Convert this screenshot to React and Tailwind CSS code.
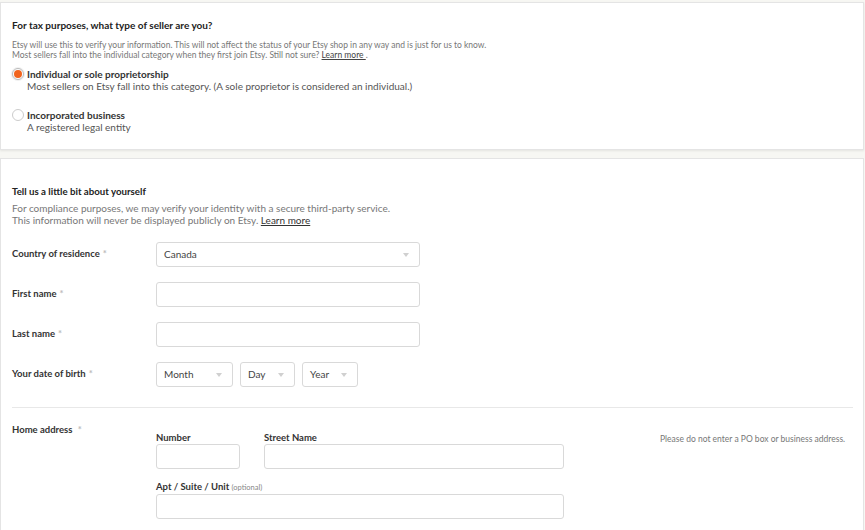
import React from "react";

const font = { fontFamily: "Lato, 'Open Sans', sans-serif" };

function Chevron() {
  return (
    <svg width="6" height="4" viewBox="0 0 6 4" className="shrink-0">
      <path d="M0 0 L6 0 L3 4 Z" fill="#d0d0d0" />
    </svg>
  );
}

function Select({ value, w }) {
  return (
    <div className={`flex items-center justify-between h-[25px] border border-[#d9d9d9] rounded-[3px] bg-white pl-[7px] pr-[10px] text-[10px] text-[#444] ${w}`}>
      <span>{value}</span>
      <Chevron />
    </div>
  );
}

function Input({ w }) {
  return <div className={`h-[25px] border border-[#d9d9d9] rounded-[3px] bg-white ${w}`} />;
}

function Req() {
  return <span className="text-[#bbbbbb] ml-[3px]">*</span>;
}

function Row({ label, children }) {
  return (
    <div className="flex items-center h-[25px]">
      <div className="w-[144px] text-[9.5px] font-bold text-[#333]">
        {label}
        <Req />
      </div>
      {children}
    </div>
  );
}

export default function App() {
  return (
    <div className="w-[865px] h-[530px] overflow-hidden bg-[#f7f7f3] pt-[2px]" style={font}>
      <div className="bg-white border border-[#e4e4e4] shadow-[0_1px_2px_rgba(0,0,0,0.08)] h-[148px] px-[11px] pt-[16px] w-[864px]">
        <div className="text-[10px] font-bold text-[#222] leading-[12px]">
          For tax purposes, what type of seller are you?
        </div>
        <div className="mt-[9px] text-[8.5px] text-[#777] leading-[10px]">
          <div>
            Etsy will use this to verify your information. This will not affect the status of your Etsy shop in any way and is just for us to know.
          </div>
          <div>
            Most sellers fall into the individual category when they first join Etsy. Still not sure?{" "}
            <span className="underline text-[#444]">Learn more </span>.
          </div>
        </div>
        <div className="mt-[8px] flex gap-[3px]">
          <div className="w-[12px] h-[12px] rounded-full border border-[#bbb] flex items-center justify-center bg-white shadow-[0_0_0_1px_#f0f0f0]">
            <div className="w-[8px] h-[8px] rounded-full bg-[#f1641e]" />
          </div>
          <div>
            <div className="text-[10px] font-bold text-[#333] leading-[12px]">Individual or sole proprietorship</div>
            <div className="text-[10px] text-[#555] leading-[12px]">
              Most sellers on Etsy fall into this category. (A sole proprietor is considered an individual.)
            </div>
          </div>
        </div>
        <div className="mt-[17px] flex gap-[3px]">
          <div className="w-[12px] h-[12px] rounded-full border border-[#ccc] bg-white" />
          <div>
            <div className="text-[10px] font-bold text-[#333] leading-[12px]">Incorporated business</div>
            <div className="text-[10px] text-[#555] leading-[12px]">A registered legal entity</div>
          </div>
        </div>
      </div>

      <div className="mt-[8px] bg-white border border-[#e4e4e4] w-[864px] h-[400px] px-[11px] pt-[26px]">
        <div className="text-[9.7px] font-bold text-[#222] leading-[12px]">Tell us a little bit about yourself</div>
        <div className="mt-[5px] text-[10px] text-[#777] leading-[12px]">
          <div>For compliance purposes, we may verify your identity with a secure third-party service.</div>
          <div>
            This information will never be displayed publicly on Etsy.{" "}
            <span className="underline text-[#333]">Learn more</span>
          </div>
        </div>

        <div className="mt-[16px] flex flex-col gap-[15px]">
          <Row label="Country of residence">
            <Select value="Canada" w="w-[264px]" />
          </Row>
          <Row label="First name">
            <Input w="w-[264px]" />
          </Row>
          <Row label="Last name">
            <Input w="w-[264px]" />
          </Row>
          <Row label="Your date of birth">
            <div className="flex gap-[7px]">
              <Select value="Month" w="w-[77px]" />
              <Select value="Day" w="w-[55px]" />
              <Select value="Year" w="w-[56px]" />
            </div>
          </Row>
        </div>

        <div className="mt-[20px] border-t border-[#e8e8e8] w-[841px]" />

        <div className="flex pt-[16px]">
          <div className="w-[144px] text-[9.5px] font-bold text-[#333] leading-[12px]">
            Home address <Req />
          </div>
          <div className="w-[408px] pt-[9px]">
            <div className="flex gap-[24px]">
              <div>
                <div className="text-[9.5px] font-bold text-[#333] leading-[10px] mb-[1px]">Number</div>
                <Input w="w-[84px]" />
              </div>
              <div>
                <div className="text-[9.5px] font-bold text-[#333] leading-[10px] mb-[1px]">Street Name</div>
                <Input w="w-[300px]" />
              </div>
            </div>
            <div className="mt-[13px] text-[9.5px] font-bold text-[#333] leading-[10px] mb-[1px]">
              Apt / Suite / Unit <span className="font-normal text-[7.5px] text-[#888]">(optional)</span>
            </div>
            <Input w="w-[408px]" />
          </div>
          <div className="ml-[96px] pt-[10px] text-[8.5px] text-[#777] leading-[10px]">
            Please do not enter a PO box or business address.
          </div>
        </div>
      </div>
    </div>
  );
}
